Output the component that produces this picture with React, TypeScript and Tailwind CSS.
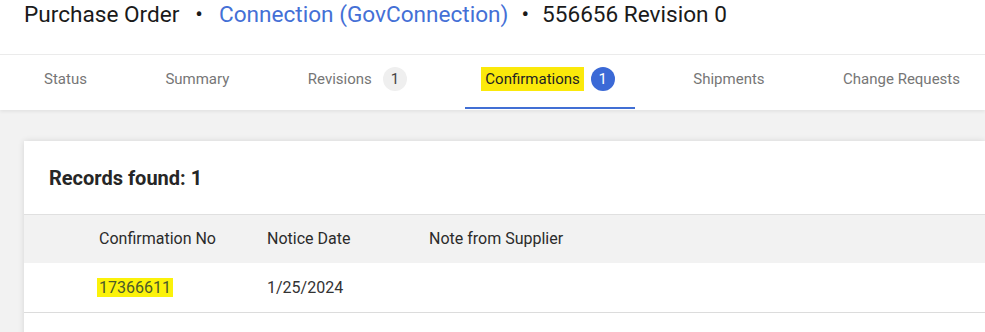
import React from 'react';

interface Tab {
    label: string;
    badge?: string;
    active?: boolean;
}

const TABS: Tab[] = [
    { label: 'Status' },
    { label: 'Summary' },
    { label: 'Revisions', badge: '1' },
    { label: 'Confirmations', badge: '1', active: true },
    { label: 'Shipments' },
    { label: 'Change Requests' },
];

const font = { fontFamily: 'Roboto, "Liberation Sans", sans-serif' };

export default function App() {
    return (
        <div className="w-[985px] h-[332px] overflow-hidden bg-[#f2f2f2]" style={font}>
            {/* Title */}
            <div className="h-[54px] bg-white flex items-start pl-6 text-[22.6px] leading-[30px] text-[#1a1a1a] whitespace-nowrap">
                <span>Purchase Order</span>
                <span className="mx-[16px]">•</span>
                <span className="text-[#4470d6]">Connection (GovConnection)</span>
                <span className="mx-[13px]">•</span>
                <span>556656 Revision 0</span>
            </div>

            {/* Tabs */}
            <div className="h-[56px] bg-white border-t border-[#ebebeb] shadow-[0_2px_3px_rgba(0,0,0,0.06)] flex pl-6 gap-[38.5px] relative">
                {TABS.map((tab) => (
                    <div
                        key={tab.label}
                        className={`relative flex items-center px-5 pb-[7px] text-[15px] whitespace-nowrap ${
                            tab.active ? 'text-[#222]' : 'text-[#767676]'
                        }`}
                    >
                        <span className={tab.active ? 'bg-[#fbe90a] px-[4px] -mx-[4px] py-[1px]' : ''}>{tab.label}</span>
                        {tab.badge && (
                            <span
                                className={`ml-[11px] w-6 h-6 rounded-full flex items-center justify-center text-[15px] ${
                                    tab.active ? 'bg-[#3b69d6] text-white' : 'bg-[#efefef] text-[#444]'
                                }`}
                            >
                                {tab.badge}
                            </span>
                        )}
                        {tab.active && <div className="absolute left-0 right-0 bottom-[1px] h-[2px] bg-[#416fd4]" />}
                    </div>
                ))}
            </div>

            {/* Card */}
            <div className="mt-[31px] ml-6 bg-white shadow-[0_0_6px_rgba(0,0,0,0.12)]">
                <div className="h-[73px] flex items-center pl-[25px] text-[20px] font-bold text-[#262626]">
                    Records found: 1
                </div>
                <div className="h-[49px] bg-[#f2f2f2] border-t border-[#e0e0e0] flex items-center text-[16px] text-[#2b2b2b]">
                    <div className="w-[243px] pl-[75px]">Confirmation No</div>
                    <div className="w-[162px]">Notice Date</div>
                    <div>Note from Supplier</div>
                </div>
                <div className="h-[50px] border-b border-[#dcdcdc] flex items-center pt-[1px] text-[16px] text-[#333]">
                    <div className="w-[243px] pl-[75px]">
                        <span className="bg-[#fbf20a] text-[#4a5a2a] px-[2px] -mx-[2px]">17366611</span>
                    </div>
                    <div className="w-[162px]">1/25/2024</div>
                    <div></div>
                </div>
                <div className="h-[30px]" />
            </div>
        </div>
    );
}
